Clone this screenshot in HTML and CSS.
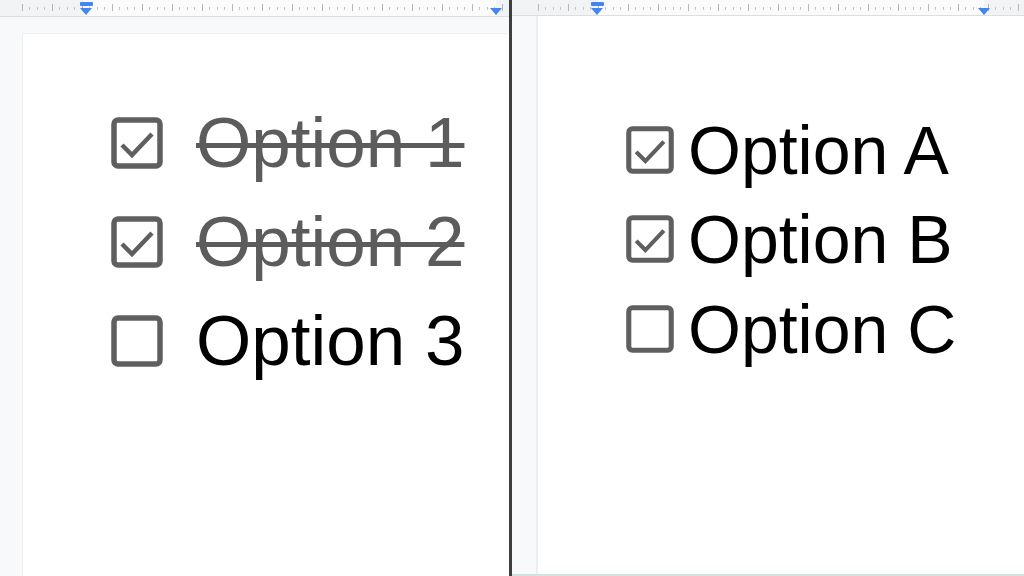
FILE: index.html
```html
<!DOCTYPE html>
<html>
<head>
<meta charset="utf-8">
<link rel="stylesheet" href="styles.css">
</head>
<body>
<div class="screen">
  <section class="pane pane-left">
    <div class="ruler ruler-left">
      <span class="indent" style="left:79px"></span>
      <span class="rmarker" style="left:490px"></span>
    </div>
    <div class="canvas canvas-left">
      <div class="page page-left">
        <ul class="list list-left">
          <li class="row">
            <svg class="box" viewBox="0 0 52 52"><rect x="3" y="3" width="46" height="46" rx="4"/><polyline points="11,28 21,38 41,17"/></svg>
            <span class="label done">Option 1</span>
          </li>
          <li class="row">
            <svg class="box" viewBox="0 0 52 52"><rect x="3" y="3" width="46" height="46" rx="4"/><polyline points="11,28 21,38 41,17"/></svg>
            <span class="label done">Option 2</span>
          </li>
          <li class="row">
            <svg class="box" viewBox="0 0 52 52"><rect x="3" y="3" width="46" height="46" rx="4"/></svg>
            <span class="label">Option 3</span>
          </li>
        </ul>
      </div>
    </div>
  </section>
  <div class="divider"></div>
  <section class="pane pane-right">
    <div class="ruler ruler-right">
      <span class="indent" style="left:78px"></span>
      <span class="rmarker" style="left:466px"></span>
    </div>
    <div class="canvas canvas-right">
      <div class="page page-right">
        <ul class="list list-right">
          <li class="row">
            <svg class="box" viewBox="0 0 52 52"><rect x="3" y="3" width="46" height="46" rx="4"/><polyline points="11,28 21,38 41,17"/></svg>
            <span class="label">Option A</span>
          </li>
          <li class="row">
            <svg class="box" viewBox="0 0 52 52"><rect x="3" y="3" width="46" height="46" rx="4"/><polyline points="11,28 21,38 41,17"/></svg>
            <span class="label">Option B</span>
          </li>
          <li class="row">
            <svg class="box" viewBox="0 0 52 52"><rect x="3" y="3" width="46" height="46" rx="4"/></svg>
            <span class="label">Option C</span>
          </li>
        </ul>
      </div>
    </div>
    <div class="bottom-strip"></div>
  </section>
</div>
</body>
</html>
```

FILE: styles.css
```css
* { box-sizing: border-box; }
html, body { margin: 0; padding: 0; }
body {
  width: 1024px;
  height: 576px;
  overflow: hidden;
  background: #f8f9fa;
  font-family: "Liberation Sans", Arial, sans-serif;
}
.screen {
  display: flex;
  width: 1024px;
  height: 576px;
}
.pane {
  display: flex;
  flex-direction: column;
  height: 576px;
  background: #f8f9fa;
}
.pane-left { width: 509px; }
.pane-right { width: 512px; }
.divider {
  width: 3px;
  height: 576px;
  background: #3e3e3e;
}

/* Ruler */
.ruler {
  position: relative;
  flex: 0 0 auto;
  border-bottom: 1px solid #dcdee1;
  background-color: #f1f3f4;
}
.ruler-left {
  height: 17px;
  background-image:
    repeating-linear-gradient(to right, #b4b7ba 0 1px, transparent 1px 30px),
    repeating-linear-gradient(to right, #c2c4c7 0 1px, transparent 1px 7.5px),
    linear-gradient(to right, transparent 0 84px, #fbfbfc 84px 496px, transparent 496px);
  background-size: 100% 7px, 100% 3px, 100% 100%;
  background-position: 22px 4px, 22px 7px, 0 0;
  background-repeat: no-repeat;
}
.ruler-right {
  height: 16px;
  background-image:
    repeating-linear-gradient(to right, #b4b7ba 0 1px, transparent 1px 30px),
    repeating-linear-gradient(to right, #c2c4c7 0 1px, transparent 1px 7.5px),
    linear-gradient(to right, transparent 0 86px, #fbfbfc 86px 472px, transparent 472px);
  background-size: 100% 7px, 100% 3px, 100% 100%;
  background-position: 26px 4px, 26px 7px, 0 0;
  background-repeat: no-repeat;
}
.indent {
  position: absolute;
  top: 2px;
  width: 15px;
  height: 13px;
}
.indent::before {
  content: "";
  position: absolute;
  left: 1px;
  top: 0;
  width: 13px;
  height: 4px;
  background: #4285f4;
  border-radius: 1px;
}
.indent::after {
  content: "";
  position: absolute;
  left: 1px;
  top: 6px;
  border-left: 6.5px solid transparent;
  border-right: 6.5px solid transparent;
  border-top: 7px solid #4285f4;
}
.rmarker {
  position: absolute;
  top: 8px;
  width: 0;
  height: 0;
  border-left: 6.5px solid transparent;
  border-right: 6.5px solid transparent;
  border-top: 7px solid #4285f4;
}

/* Canvas / page */
.canvas {
  flex: 1 1 auto;
  display: flex;
  min-height: 0;
}
.canvas-left { padding: 17px 0 0 23px; }
.canvas-right { padding: 0 0 0 26px; }
.page {
  flex: 1 1 auto;
  background: #ffffff;
}
.page-left { box-shadow: -1px -1px 0 0 #eceef0; }
.page-right { box-shadow: -2px 0 0 0 #eceef0; }
.bottom-strip {
  flex: 0 0 2px;
  background: #d3e2de;
}

/* List */
.list {
  list-style: none;
  margin: 0;
  padding: 0;
}
.list-left { padding: 59px 0 0 88px; }
.list-right { padding: 89px 0 0 88px; }
.row {
  display: flex;
  align-items: center;
}
.list-left .row { height: 99px; }
.list-right .row { height: 89.5px; }
.box {
  flex: 0 0 auto;
  fill: none;
  stroke: #5f5f5f;
}
.box rect { stroke-width: 5.5; }
.box polyline { stroke-width: 4.5; stroke-linecap: butt; stroke-linejoin: miter; }
.list-left .box { width: 52px; height: 52px; margin-right: 33px; }
.list-right .box { width: 48px; height: 48px; margin-right: 14px; }
.label {
  color: #000;
  white-space: nowrap;
  line-height: 1;
}
.list-left .label { font-size: 71px; }
.list-right .label { font-size: 68px; }
.label.done {
  color: #5c5c5c;
  text-decoration: line-through;
  text-decoration-thickness: 5px;
  text-decoration-color: #5c5c5c;
}
```
